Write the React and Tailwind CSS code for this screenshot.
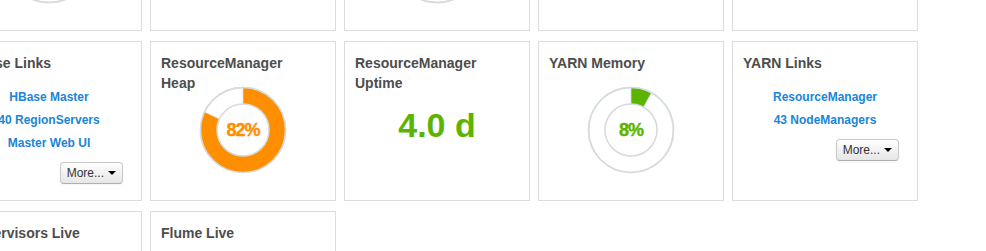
import React from "react";

function pt(cx, cy, rad, frac) {
  const a = frac * 2 * Math.PI - Math.PI / 2;
  return [cx + rad * Math.cos(a), cy + rad * Math.sin(a)];
}

function sector(f0, f1, R, r) {
  const cx = 44, cy = 44;
  if (f1 - f0 >= 0.9999) f1 = f0 + 0.9999;
  const [x0, y0] = pt(cx, cy, R, f0);
  const [x1, y1] = pt(cx, cy, R, f1);
  const [x2, y2] = pt(cx, cy, r, f1);
  const [x3, y3] = pt(cx, cy, r, f0);
  const large = f1 - f0 > 0.5 ? 1 : 0;
  return `M${x0} ${y0} A${R} ${R} 0 ${large} 1 ${x1} ${y1} L${x2} ${y2} A${r} ${r} 0 ${large} 0 ${x3} ${y3} Z`;
}

function Donut({ pct, color, text }) {
  const R = 42.5, r = 26;
  const f = pct / 100;
  return (
    <svg width="88" height="88" viewBox="0 0 88 88" className="mx-auto block">
      <circle cx="44" cy="44" r={R} fill="#fff" stroke="#d6dbdd" strokeWidth="1.5" />
      {f > 0 && <path d={sector(0, f, R, r)} fill={color} />}
      {f > 0 && f < 1 && <path d={sector(f, 1, R - 0.5, r)} fill="#fff" stroke="#d6dbdd" strokeWidth="0.8" />}
      <circle cx="44" cy="44" r={R} fill="none" stroke="#d6dbdd" strokeWidth="1.5" />
      <circle cx="44" cy="44" r={r} fill="#fff" stroke="#d6dbdd" strokeWidth="1.5" />
      {text && (
        <text
          x="44"
          y="49.5"
          textAnchor="middle"
          fill={color}
          fontSize="18"
          fontWeight="bold"
          letterSpacing="-1"
          stroke={color}
          strokeWidth="0.4"
          fontFamily="'Liberation Sans', Arial, sans-serif"
        >
          {text}
        </text>
      )}
    </svg>
  );
}

function Card({ title, children }) {
  return (
    <div className="h-[160px] border border-[#dcdcdc] bg-white px-[10px] pt-[11px] flex flex-col">
      <div className="h-[33px] max-w-[140px] text-[14px] font-bold leading-[20px] text-[#4d4d4d] whitespace-normal">
        {title}
      </div>
      <div>{children}</div>
    </div>
  );
}

function MoreButton() {
  return (
    <div className="flex justify-end pr-[8px] mt-[7px]">
      <div className="h-[22px] px-[6px] border border-[#c8c8c8] border-b-[#b0b0b0] rounded-[4px] bg-linear-to-b from-white to-[#e6e6e6] text-[12px] text-[#333] flex items-center gap-[4px] shadow-[inset_0_1px_0_rgba(255,255,255,0.2),0_1px_2px_rgba(0,0,0,0.05)]">
        <span>More...</span>
        <span className="w-0 h-0 border-x-[4px] border-x-transparent border-t-[4px] border-t-black"></span>
      </div>
    </div>
  );
}

function Links({ items }) {
  return (
    <div>
      <ul className="text-center text-[12px] font-bold leading-[23px] text-[#1a85d6]">
        {items.map((t) => (
          <li key={t}>{t}</li>
        ))}
      </ul>
      <MoreButton />
    </div>
  );
}

function Uptime({ value }) {
  return (
    <div className="pt-[22px] text-center text-[34px] font-bold leading-[35px] text-[#5ab400]">{value}</div>
  );
}

export default function App() {
  return (
    <div
      className="w-[986px] h-[251px] overflow-hidden bg-white"
      style={{ fontFamily: "'Liberation Sans', Arial, sans-serif" }}
    >
      <div className="ml-[-44px] mt-[-129px] grid grid-cols-[repeat(5,186px)] gap-x-[8px] gap-y-[10px]">
        <Card title="">
          <Donut pct={0} color="#5ab400" text="" />
        </Card>
        <Card title="">
          <div />
        </Card>
        <Card title="">
          <Donut pct={0} color="#5ab400" text="" />
        </Card>
        <Card title="">
          <div />
        </Card>
        <Card title="">
          <div />
        </Card>

        <Card title="HBase Links">
          <Links items={["HBase Master", "40 RegionServers", "Master Web UI"]} />
        </Card>
        <Card title="ResourceManager Heap">
          <Donut pct={82} color="#ff8e00" text="82%" />
        </Card>
        <Card title="ResourceManager Uptime">
          <Uptime value="4.0 d" />
        </Card>
        <Card title="YARN Memory">
          <Donut pct={8} color="#5ab400" text="8%" />
        </Card>
        <Card title="YARN Links">
          <Links items={["ResourceManager", "43 NodeManagers"]} />
        </Card>

        <Card title="Supervisors Live">
          <div />
        </Card>
        <Card title="Flume Live">
          <div />
        </Card>
      </div>
    </div>
  );
}
